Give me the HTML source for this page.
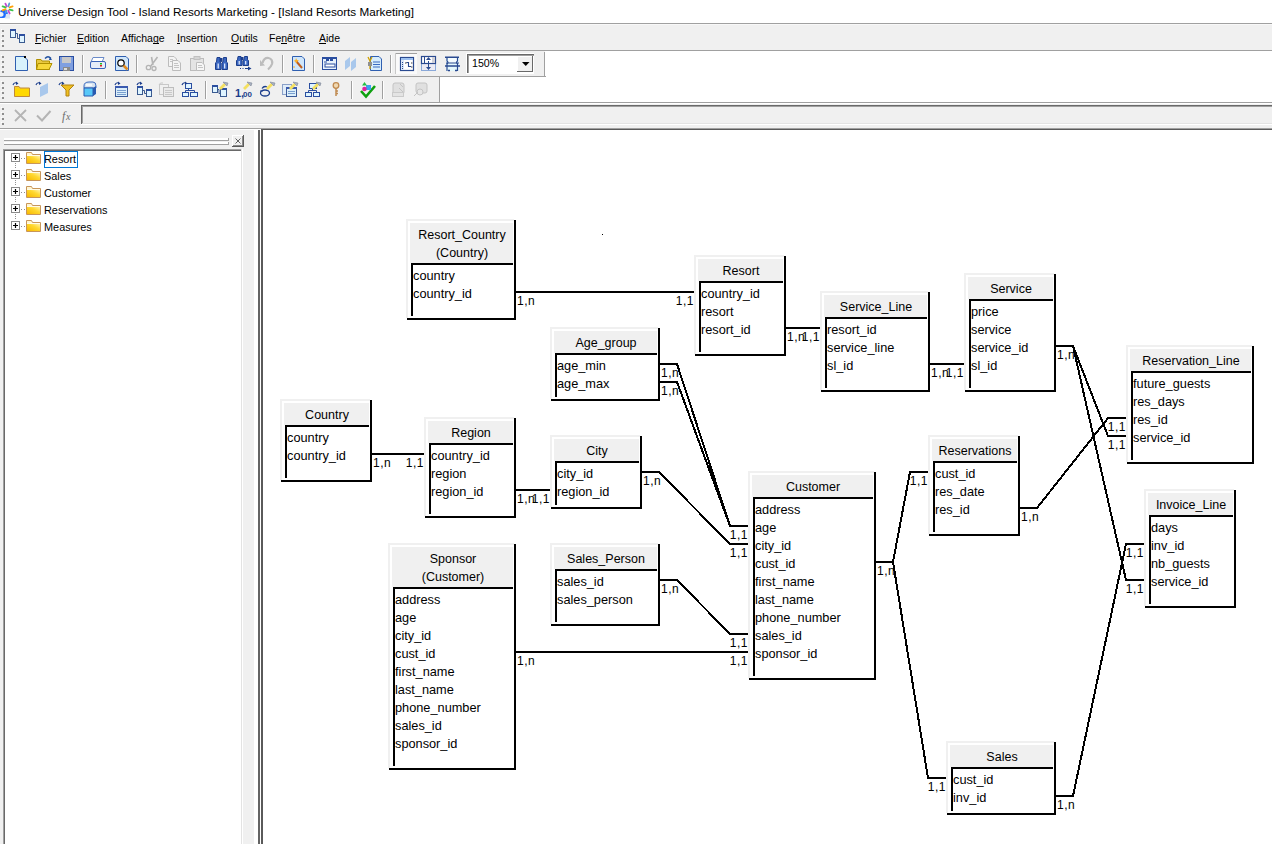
<!DOCTYPE html>
<html><head><meta charset="utf-8">
<style>
*{margin:0;padding:0;box-sizing:border-box}
html,body{width:1272px;height:844px;overflow:hidden;background:#fff;font-family:"Liberation Sans",sans-serif;color:#000}
.a{position:absolute}
i{position:absolute;display:block}
.tb{position:absolute;background:#fff}
.hd{position:absolute;text-align:center;font-size:12.5px;line-height:18px;white-space:nowrap}
.rw{position:absolute;font-size:12.75px;line-height:18px;white-space:nowrap}
.lb{position:absolute;font-size:12px;line-height:12px;white-space:nowrap;letter-spacing:0.5px}
svg.lines{position:absolute;left:0;top:0}
svg.lines path{fill:none;stroke:#000;stroke-width:2;shape-rendering:crispEdges;stroke-linejoin:bevel}
.menu span{position:absolute;top:32px;font-size:10.5px;line-height:12px}
.menu u{text-decoration:none;position:relative}.menu u:after{content:"";position:absolute;left:0;right:0;top:11px;height:1px;background:#000}
</style></head><body>
<!-- title bar -->
<div class="a" style="left:0;top:0;width:1272px;height:23px;background:#fff"></div>
<div class="a" style="left:18px;top:5px;font-size:11.7px;line-height:14px;white-space:nowrap">Universe Design Tool - Island Resorts Marketing - [Island Resorts Marketing]</div>
<i style="left:0;top:23px;width:1272px;height:1px;background:#a0a0a0"></i>
<!-- menu bar -->
<i style="left:0;top:24px;width:1272px;height:26px;background:#f0f0f0"></i>
<i style="left:0;top:24px;width:1272px;height:1px;background:#f8f8f8"></i>
<i style="left:0;top:50px;width:1272px;height:1px;background:#a0a0a0"></i>
<div class="menu">
<span style="left:35px"><u>F</u>ichier</span>
<span style="left:77px"><u>E</u>dition</span>
<span style="left:121px">Afficha<u>g</u>e</span>
<span style="left:177px"><u>I</u>nsertion</span>
<span style="left:231px"><u>O</u>utils</span>
<span style="left:269px">Fe<u>n</u>être</span>
<span style="left:319px"><u>A</u>ide</span>
</div>
<!-- toolbar 1 -->
<i style="left:0;top:51px;width:545px;height:25px;background:#f0f0f0"></i>
<i style="left:0;top:76px;width:546px;height:1px;background:#a0a0a0"></i>
<i style="left:544px;top:52px;width:1px;height:24px;background:#a0a0a0"></i>
<!-- toolbar 2 -->
<i style="left:0;top:77px;width:440px;height:25px;background:#f0f0f0"></i>
<i style="left:439px;top:77px;width:1px;height:25px;background:#a0a0a0"></i>
<!-- formula bar -->
<i style="left:0;top:102px;width:1272px;height:1px;background:#a0a0a0"></i>
<i style="left:0;top:103px;width:1272px;height:1px;background:#fff"></i>
<i style="left:0;top:104px;width:1272px;height:24px;background:#f0f0f0"></i>
<i style="left:0;top:128px;width:1272px;height:1px;background:#a0a0a0"></i>
<i style="left:0;top:129px;width:261px;height:1px;background:#fff"></i>
<i style="left:261px;top:129px;width:1011px;height:1px;background:#5a5a5a"></i>
<!-- left panel -->
<i style="left:0;top:130px;width:254px;height:714px;background:#f0f0f0"></i>
<i style="left:3px;top:149px;width:238px;height:695px;background:#a0a0a0"></i>
<i style="left:4px;top:150px;width:237px;height:694px;background:#696969"></i>
<i style="left:5px;top:151px;width:236px;height:693px;background:#fff"></i>
<i style="left:241px;top:149px;width:1px;height:695px;background:#e3e3e3"></i>
<i style="left:242px;top:149px;width:1px;height:695px;background:#fff"></i>
<i style="left:254px;top:130px;width:4px;height:714px;background:#fff"></i>
<i style="left:258px;top:130px;width:2px;height:714px;background:#646464"></i>
<i style="left:261px;top:129px;width:2px;height:715px;background:#5a5a5a"></i>
<!-- formula box -->
<i style="left:81px;top:105px;width:1191px;height:1px;background:#696969"></i>
<i style="left:81px;top:105px;width:1px;height:19px;background:#696969"></i>
<i style="left:82px;top:106px;width:1190px;height:1px;background:#a0a0a0"></i>
<i style="left:82px;top:106px;width:1px;height:17px;background:#a0a0a0"></i>
<i style="left:82px;top:123px;width:1190px;height:1px;background:#e3e3e3"></i>
<i style="left:81px;top:124px;width:1191px;height:1px;background:#fff"></i>
<!-- panel title -->
<i style="left:4px;top:138px;width:224px;height:2px;background:#fff"></i>
<i style="left:4px;top:140px;width:225px;height:1px;background:#a0a0a0"></i>
<i style="left:4px;top:142px;width:224px;height:2px;background:#fff"></i>
<i style="left:4px;top:144px;width:225px;height:1px;background:#a0a0a0"></i>
<i style="left:228px;top:138px;width:1px;height:3px;background:#a0a0a0"></i>
<i style="left:228px;top:142px;width:1px;height:3px;background:#a0a0a0"></i>
<i style="left:232px;top:135px;width:12px;height:12px;background:#fff"></i>
<i style="left:233px;top:136px;width:10px;height:9px;background:#f0f0f0"></i>
<i style="left:242px;top:136px;width:1px;height:11px;background:#8a8a8a"></i>
<i style="left:243px;top:135px;width:1px;height:12px;background:#5a5a5a"></i>
<i style="left:233px;top:145px;width:10px;height:1px;background:#8a8a8a"></i>
<i style="left:232px;top:146px;width:12px;height:1px;background:#5a5a5a"></i>
<svg class="a" style="left:232px;top:135px" width="12" height="12"><path d="M3.5,3.5 L8.5,8.5 M8.5,3.5 L3.5,8.5" stroke="#505050" stroke-width=".9"/></svg>
<svg class="a" style="left:0;top:0" width="560" height="130" viewBox="0 0 560 130"><g>
<path d="M0.5,10.5 C3,9 6.5,9.5 7.5,12 C8.5,15 7,18 3,18 L0,18 Z" fill="#1f6cff"/>
<path d="M0,12 C2,11.5 4,12.5 3.5,15 C3,16.5 1.5,17 0,16.5 Z" fill="#eef3fa"/>
<path d="M6,14 L10,14 L10,18.5 L5,18.5 Z" fill="#dde6f2"/>
<g stroke-width="1.8" stroke-linecap="round">
<path d="M5.4,3.6 L6.7,6.4" stroke="#c34ccf"/>
<path d="M8.3,10.6 L9.6,13.4" stroke="#c34ccf"/>
<path d="M9.3,3.4 L8.4,6.3" stroke="#5b9bd5"/>
<path d="M6.3,10.6 L5.7,12.6" stroke="#5b9bd5"/>
<path d="M2.6,6.4 L5.6,7.4" stroke="#3ec24a"/>
<path d="M9.6,9.6 L12.6,10.4" stroke="#3ec24a"/>
<path d="M9.6,7.4 L12.6,6.4" stroke="#ffa10a"/>
<path d="M2.6,10.4 L5.6,9.2" stroke="#ffa10a"/>
</g></g><rect x="2" y="30" width="2" height="2" fill="#8e8e8e"/><rect x="1" y="29" width="1" height="1" fill="#fff"/><rect x="2" y="35" width="2" height="2" fill="#8e8e8e"/><rect x="1" y="34" width="1" height="1" fill="#fff"/><rect x="2" y="40" width="2" height="2" fill="#8e8e8e"/><rect x="1" y="39" width="1" height="1" fill="#fff"/><rect x="2" y="45" width="2" height="2" fill="#8e8e8e"/><rect x="1" y="44" width="1" height="1" fill="#fff"/><rect x="10.5" y="29.5" width="5" height="8" fill="#dff4ff" stroke="#3a5a90"/><rect x="10" y="29" width="6" height="2" fill="#2c4fa0"/>
<rect x="19.5" y="34.5" width="5" height="8" fill="#dff4ff" stroke="#3a5a90"/><rect x="19" y="34" width="6" height="2" fill="#2c4fa0"/>
<path d="M16,33.5 H17.5 V38.5 H19" fill="none" stroke="#3a5a90"/><rect x="2" y="56" width="2" height="2" fill="#8e8e8e"/><rect x="1" y="55" width="1" height="1" fill="#fff"/><rect x="2" y="61" width="2" height="2" fill="#8e8e8e"/><rect x="1" y="60" width="1" height="1" fill="#fff"/><rect x="2" y="66" width="2" height="2" fill="#8e8e8e"/><rect x="1" y="65" width="1" height="1" fill="#fff"/><rect x="2" y="71" width="2" height="2" fill="#8e8e8e"/><rect x="1" y="70" width="1" height="1" fill="#fff"/><path d="M15.5,56.5 H24 L27.5,60 V70.5 H15.5 Z" fill="#d8f2fc" stroke="#2f5fb0"/><rect x="24" y="56" width="2" height="2" fill="#000"/><path d="M36.5,59.5 H41 L42,61 H49.5 V69.5 H36.5 Z" fill="#e8c840" stroke="#b09000"/>
<path d="M38,63.5 H52 L49,69.5 H36.5 Z" fill="#f7d83a" stroke="#b09000"/>
<path d="M45,58.5 Q48,55 51,58.5" fill="none" stroke="#2050a0" stroke-width="1.3"/><path d="M50,57 L52,60 L49,60 Z" fill="#2050a0"/><rect x="59.5" y="56.5" width="14" height="14" fill="#7f9fe0" stroke="#2a4ea0"/><rect x="62" y="57" width="9" height="6" fill="#c8c8c8"/><rect x="63" y="67" width="7" height="4" fill="#8a8a8a"/><rect x="64" y="68" width="3" height="2" fill="#ddd"/><rect x="82" y="55" width="1" height="18" fill="#a0a0a0"/><rect x="83" y="55" width="1" height="18" fill="#fff"/><path d="M93,57.5 H104 L102,62 H91 Z" fill="#fff" stroke="#6a8ac8"/><rect x="90.5" y="61.5" width="15" height="7" rx="1.5" fill="#e6ecf8" stroke="#3b63b8"/><rect x="100" y="63" width="2" height="1.5" fill="#20c020"/><rect x="100" y="65" width="2" height="1.5" fill="#e02020"/><path d="M115.5,56.5 H126 L128.5,59 V70.5 H115.5 Z" fill="#cfe6fb" stroke="#2f5fb0"/><circle cx="121" cy="63" r="3.2" fill="#fff" stroke="#000" stroke-width="1.2"/><path d="M123.5,65.5 L127.5,69.5" stroke="#e08a20" stroke-width="2.5"/><rect x="136" y="55" width="1" height="18" fill="#a0a0a0"/><rect x="137" y="55" width="1" height="18" fill="#fff"/><path d="M157.5,57 L150.5,66.5 M151.5,57 L153,65" stroke="#b4b4b4" stroke-width="1.6"/><circle cx="148.5" cy="67.5" r="2.2" fill="none" stroke="#b4b4b4" stroke-width="1.3"/><circle cx="154" cy="68.5" r="2" fill="none" stroke="#b4b4b4" stroke-width="1.3"/><path d="M168.5,56.5 H174 L176.5,59 V66.5 H168.5 Z" fill="#f4f4f4" stroke="#bcbcbc"/><path d="M172.5,60.5 H178 L180.5,63 V70.5 H172.5 Z" fill="#f4f4f4" stroke="#bcbcbc"/><path d="M174,63.5 H178 M174,65.5 H179 M174,67.5 H179 M170,59.5 H173 M170,61.5 H172" stroke="#c4c4c4"/><rect x="190.5" y="58.5" width="13" height="12" fill="#e4e4e4" stroke="#bcbcbc"/><rect x="194" y="56.5" width="6" height="3" fill="#d4d4d4" stroke="#c0c0c0"/><path d="M196.5,62.5 H202 L204.5,65 V70.5 H196.5 Z" fill="#f6f6f6" stroke="#bcbcbc"/><path d="M198,65.5 H202 M198,67.5 H203" stroke="#c4c4c4"/><path d="M217,57.5 H220 V61.94 L221,62.85 V69.5 H215.5 V62.85 L216.5,61.94 Z" fill="#3a66c0" stroke="#1c3e8c" stroke-width="1"/><path d="M218.2,63.5 V68.5" stroke="#e8f0ff" stroke-width="1.2"/><path d="M223.5,57.5 H226.5 V61.94 L227.5,62.85 V69.5 H222.0 V62.85 L223.0,61.94 Z" fill="#3a66c0" stroke="#1c3e8c" stroke-width="1"/><path d="M224.7,63.5 V68.5" stroke="#e8f0ff" stroke-width="1.2"/><rect x="220" y="58" width="2.5" height="3.9" fill="#1c3e8c"/><path d="M238,56.5 H241 V59.8 L242,60.5 V65.5 H236.5 V60.5 L237.5,59.8 Z" fill="#3a66c0" stroke="#1c3e8c" stroke-width="1"/><path d="M239.2,61.0 V64.5" stroke="#e8f0ff" stroke-width="1.2"/><path d="M244.5,56.5 H247.5 V59.8 L248.5,60.5 V65.5 H243.0 V60.5 L244.0,59.8 Z" fill="#3a66c0" stroke="#1c3e8c" stroke-width="1"/><path d="M245.7,61.0 V64.5" stroke="#e8f0ff" stroke-width="1.2"/><rect x="241" y="57" width="2.5" height="3.0" fill="#1c3e8c"/><path d="M240,68.5 H241 M242.5,68.5 H243.5 M245,68.5 H249" stroke="#1c3e8c" stroke-width="1.2"/><path d="M248,66.5 L251.5,68.5 L248,70.5 Z" fill="#1c3e8c"/><path d="M262.5,63 Q264,57.5 268.5,58 Q273,59 272,64 Q271,67 268,69.5" fill="none" stroke="#bcbcbc" stroke-width="2.2"/><path d="M260,60 L265,65.5 L260,66 Z" fill="#bcbcbc"/><rect x="282" y="55" width="1" height="18" fill="#a0a0a0"/><rect x="283" y="55" width="1" height="18" fill="#fff"/><path d="M292.5,56.5 H302 L304.5,59 V70.5 H292.5 Z" fill="#cfe6fb" stroke="#2f5fb0"/><path d="M296,61 L302,68" stroke="#c06020" stroke-width="2"/><path d="M296,58 L297,60 L299,60.5 L297,61.5 L296.5,63.5 L295.5,61.5 L293.5,61 L295.5,60 Z" fill="#ffb020"/><path d="M294,66 L295,67 L294,68 L293,67 Z" fill="#ffb020"/><rect x="313" y="55" width="1" height="18" fill="#a0a0a0"/><rect x="314" y="55" width="1" height="18" fill="#fff"/><rect x="322.5" y="57.5" width="14" height="12" fill="#e8f2fc" stroke="#2a4ea0"/><rect x="322" y="57" width="15" height="2" fill="#2a4ea0"/><rect x="326" y="59" width="3" height="2" fill="#2a4ea0"/><rect x="330" y="59" width="3" height="2" fill="#2a4ea0"/><rect x="325" y="64" width="10" height="3" fill="#fff" stroke="#2a4ea0" stroke-width="1"/><path d="M324,62 H327" stroke="#2a4ea0"/><path d="M345,61 L350,57 V66 L345,70 Z" fill="#a9c8ec"/><path d="M351,62 L356,58 V67 L351,71 Z" fill="#a9c8ec"/><path d="M370.5,56.5 H379 L381.5,59 V70.5 H370.5 Z" fill="#d6ecfc" stroke="#2f5fb0"/><path d="M373,62 H380 M373,64.5 H380 M373,67 H380" stroke="#3a6ac0"/><path d="M368,57 L370,61 L372,57 M370,61 V69" stroke="#d0a000" stroke-width="1.3" fill="none"/><rect x="368" y="62" width="4" height="4" fill="#909090"/><rect x="390" y="55" width="1" height="18" fill="#a0a0a0"/><rect x="391" y="55" width="1" height="18" fill="#fff"/><rect x="395" y="53" width="22" height="21" fill="#fafafa"/><rect x="395" y="53" width="22" height="1" fill="#a0a0a0"/><rect x="395" y="53" width="1" height="21" fill="#c8c8c8"/><rect x="400.5" y="57.5" width="13" height="13" fill="#fff" stroke="#2a4a90" stroke-width="1.2"/><rect x="401" y="58" width="12" height="2" fill="#9cc0f0"/><rect x="401" y="60" width="3" height="10" fill="#dce8f8"/><path d="M402,62.5 H403 M402,64.5 H403 M402,66.5 H403 M402,68.5 H403" stroke="#2a4a90"/><path d="M406,62.5 H408.5 V66.5 H411" fill="none" stroke="#2a4a90" stroke-width="1.1"/><rect x="405" y="62" width="1.5" height="2" fill="#a0a0a0"/><rect x="411" y="62" width="1.5" height="2" fill="#a0a0a0"/><rect x="411" y="66" width="1.5" height="2" fill="#a0a0a0"/><rect x="421.5" y="63.5" width="14" height="7" fill="#ecebf4" stroke="#8aa8d8"/><rect x="421.5" y="56.5" width="14" height="7" fill="#fff" stroke="#2a4a90" stroke-width="1.2"/><rect x="432" y="57" width="3" height="6" fill="#d0d0d8"/><path d="M424.5,57 V63 M428.5,61 V69" stroke="#2a4a90" stroke-width="1"/><path d="M426,60 L428.5,57 L431,60 Z M426,67 L428.5,70 L431,67 Z" fill="#2a4a90"/><rect x="446" y="57" width="13" height="14" fill="#e4f8fc"/><rect x="448" y="58" width="9" height="5" fill="#f4fcff"/><path d="M445,57.2 H459 M449,66 H456" stroke="#2a4a90" stroke-width="1.6"/><path d="M447,57 V61 Q449,62.5 447,64 V71 M457.5,57 V61 Q455.5,62.5 457.5,64 V71 M446,63 H459" fill="none" stroke="#2a4a90" stroke-width="1.2"/><path d="M445,66 H449 M456,66 H460 M448,70.5 H450 M455,70.5 H457" stroke="#2a4a90" stroke-width="1.4"/><rect x="466" y="53" width="68" height="21" fill="#fff"/><rect x="467" y="54" width="67" height="1" fill="#696969"/><rect x="467" y="54" width="1" height="19" fill="#696969"/><rect x="468" y="55" width="1" height="18" fill="#a0a0a0"/><rect x="468" y="55" width="66" height="1" fill="#a0a0a0"/>
<rect x="517" y="56" width="16" height="16" fill="#f0f0f0"/><rect x="532" y="56" width="1" height="16" fill="#696969"/><rect x="517" y="71" width="16" height="1" fill="#696969"/><rect x="517" y="56" width="15" height="1" fill="#fff"/><rect x="517" y="56" width="1" height="15" fill="#fff"/>
<path d="M522,62 H529.5 L525.75,66 Z" fill="#000"/><rect x="2" y="82" width="2" height="2" fill="#8e8e8e"/><rect x="1" y="81" width="1" height="1" fill="#fff"/><rect x="2" y="87" width="2" height="2" fill="#8e8e8e"/><rect x="1" y="86" width="1" height="1" fill="#fff"/><rect x="2" y="92" width="2" height="2" fill="#8e8e8e"/><rect x="1" y="91" width="1" height="1" fill="#fff"/><rect x="2" y="97" width="2" height="2" fill="#8e8e8e"/><rect x="1" y="96" width="1" height="1" fill="#fff"/><path d="M14.5,86.5 H19 L20,88 H29.5 V96.5 H14.5 Z" fill="#f8d020" stroke="#c08a3a"/><rect x="15" y="89" width="14" height="7" fill="#ffd800"/><path d="M13,85 Q14,82 17,83" fill="none" stroke="#1c3e8c" stroke-width="1.2"/><path d="M16,81.5 L18.5,83.5 L16,85 Z" fill="#1c3e8c"/><path d="M40,87 L48,83 V93 L40,97 Z" fill="#a9c8ec"/><path d="M36,85 Q37,82 40,83" fill="none" stroke="#1c3e8c" stroke-width="1.2"/><path d="M39,81.5 L41.5,83.5 L39,85 Z" fill="#1c3e8c"/><path d="M61,85 H74 L69,90 V96 L66,96 V90 Z" fill="#f0c020" stroke="#b08010" stroke-width="1"/><path d="M59,85 Q60,82 63,83" fill="none" stroke="#1c3e8c" stroke-width="1.2"/><path d="M62,81.5 L64.5,83.5 L62,85 Z" fill="#1c3e8c"/><path d="M84,86 Q84,82 89,82 H93 Q96,82 96,86 V88 H84 Z" fill="#d8e4f0" stroke="#3a6ac0"/><path d="M84,88 H93 V96 H84 Z" fill="#58c8f8" stroke="#2a5ab0"/><path d="M93,88 L96,86 V94 L93,96 Z" fill="#2a5ab0"/><path d="M86,85 H92" stroke="#fff" stroke-width="1.5"/><rect x="105" y="81" width="1" height="18" fill="#a0a0a0"/><rect x="106" y="81" width="1" height="18" fill="#fff"/><rect x="115.5" y="86.5" width="12" height="10" fill="#dbeefa" stroke="#3a5a98"/><rect x="115" y="86" width="13" height="2" fill="#3a5ab0"/><path d="M117,90.5 H126 M117,92.5 H126 M117,94.5 H126" stroke="#7aa0d0"/><path d="M115,85 Q116,82 119,83" fill="none" stroke="#1c3e8c" stroke-width="1.2"/><path d="M118,81.5 L120.5,83.5 L118,85 Z" fill="#1c3e8c"/><rect x="137.5" y="86.5" width="5" height="8" fill="#dff4ff" stroke="#3a5a90"/><rect x="137" y="86" width="6" height="2" fill="#2c4fa0"/><rect x="146.5" y="89.5" width="5" height="7" fill="#dff4ff" stroke="#3a5a90"/><rect x="146" y="89" width="6" height="2" fill="#2c4fa0"/><path d="M143,90.5 H144.5 V93.5 H146" fill="none" stroke="#3a5a90"/><path d="M137,85 Q138,82 141,83" fill="none" stroke="#1c3e8c" stroke-width="1.2"/><path d="M140,81.5 L142.5,83.5 L140,85 Z" fill="#1c3e8c"/><rect x="159.5" y="84.5" width="9" height="10" fill="#f0f0f0" stroke="#c8c8c8"/><rect x="163.5" y="87.5" width="10" height="9" fill="#eaeaea" stroke="#bdbdbd"/><path d="M165,90.5 H172 M165,92.5 H172 M165,94.5 H172" stroke="#c8c8c8"/><path d="M159,85 Q160,82 163,83" fill="none" stroke="#c8c8c8"/><rect x="185.5" y="83.5" width="6" height="5" fill="#dff4ff" stroke="#2a4ea0"/><rect x="182.5" y="92.5" width="6" height="4" fill="#dff4ff" stroke="#2a4ea0"/><rect x="190.5" y="92.5" width="7" height="4" fill="#dff4ff" stroke="#2a4ea0"/><path d="M188.5,89 V90.5 M185.5,92 V90.5 H194.5 V92" fill="none" stroke="#2a4ea0"/><path d="M182,85 Q183,82 186,83" fill="none" stroke="#1c3e8c" stroke-width="1.2"/><path d="M185,81.5 L187.5,83.5 L185,85 Z" fill="#1c3e8c"/><rect x="205" y="81" width="1" height="18" fill="#a0a0a0"/><rect x="206" y="81" width="1" height="18" fill="#fff"/><rect x="212.5" y="85.5" width="5" height="7" fill="#dff4ff" stroke="#3a5a90"/><rect x="212" y="85" width="6" height="2" fill="#2c4fa0"/><rect x="220.5" y="88.5" width="6" height="8" fill="#dff4ff" stroke="#3a5a90"/><rect x="220" y="88" width="7" height="2" fill="#2c4fa0"/><path d="M218,89.5 H219 V93.5 H220" fill="none" stroke="#3a5a90"/><path d="M219,88 L224,83 L226,85 L221,90 Z" fill="#f4e060"/><path d="M223,82 L227,86 L228,83 Z" fill="#a8b0c0" stroke="#808898" stroke-width=".6"/><text x="235" y="96.5" font-family="Liberation Sans" font-weight="bold" font-size="11" fill="#1c3e8c">1,</text><text x="243" y="96.5" font-family="Liberation Sans" font-weight="bold" font-size="8" fill="#1c3e8c">00</text><path d="M243,88 L248,83 L250,85 L245,90 Z" fill="#f4e060"/><path d="M247,82 L251,86 L252,83 Z" fill="#a8b0c0" stroke="#808898" stroke-width=".6"/><ellipse cx="265" cy="93" rx="4.5" ry="3" fill="none" stroke="#1c3e8c" stroke-width="1.3"/><path d="M262,88.5 Q264,85.5 267,87" fill="none" stroke="#1c3e8c" stroke-width="1.3"/><path d="M260,91 H263" stroke="#1c3e8c"/><path d="M266,88 L271,83 L273,85 L268,90 Z" fill="#f4e060"/><path d="M270,82 L274,86 L275,83 Z" fill="#a8b0c0" stroke="#808898" stroke-width=".6"/><rect x="282.5" y="84.5" width="9" height="10" fill="#e0ecf8" stroke="#8aa0c8"/><rect x="286.5" y="87.5" width="10" height="9" fill="#dbeefa" stroke="#3a5a98"/><rect x="286" y="87" width="11" height="2" fill="#3a5ab0"/><path d="M288,91.5 H295 M288,93.5 H295" stroke="#7aa0d0"/><path d="M289,88 L294,83 L296,85 L291,90 Z" fill="#f4e060"/><path d="M293,82 L297,86 L298,83 Z" fill="#a8b0c0" stroke="#808898" stroke-width=".6"/><rect x="309.5" y="83.5" width="7" height="5" fill="#dff4ff" stroke="#2a4ea0"/><rect x="305.5" y="92.5" width="6" height="4" fill="#dff4ff" stroke="#2a4ea0"/><rect x="313.5" y="92.5" width="6" height="4" fill="#dff4ff" stroke="#2a4ea0"/><path d="M308.5,92 V90.5 H316.5 V92 M312.5,89 V90.5" fill="none" stroke="#2a4ea0"/><path d="M312,88 L317,83 L319,85 L314,90 Z" fill="#f4e060"/><path d="M316,82 L320,86 L321,83 Z" fill="#a8b0c0" stroke="#808898" stroke-width=".6"/><circle cx="336" cy="85.5" r="2.8" fill="#f0d8b0" stroke="#c08a50" stroke-width="1.3"/><path d="M336,88 V96 M336,91 H338 M336,93.5 H338" stroke="#c08a50" stroke-width="1.5"/><rect x="351" y="81" width="1" height="18" fill="#a0a0a0"/><rect x="352" y="81" width="1" height="18" fill="#fff"/><path d="M361,91 L366,96.5 L375,86" fill="none" stroke="#10a010" stroke-width="2.6"/><rect x="366" y="85" width="5" height="5" fill="#3aa0f0"/><path d="M362,85.5 L364.5,82 L367,85.5 Z" fill="#20c040"/><circle cx="364.5" cy="89" r="2.3" fill="#e020a0"/><rect x="382" y="81" width="1" height="18" fill="#a0a0a0"/><rect x="383" y="81" width="1" height="18" fill="#fff"/><rect x="393" y="83" width="11" height="11" rx="2" fill="#e0e0e0" stroke="#c4c4c4"/><path d="M400,84 L403,87 M399,88 L403,92" stroke="#c4c4c4"/><rect x="392.5" y="92.5" width="11" height="4" fill="#e4e4e4" stroke="#cacaca"/><rect x="416" y="83" width="11" height="10" rx="2" fill="#e0e0e0" stroke="#c4c4c4"/><circle cx="420" cy="92" r="3" fill="#e6e6e6" stroke="#c4c4c4"/><path d="M414,96 L418,92" stroke="#c4c4c4"/><rect x="2" y="108" width="2" height="2" fill="#8e8e8e"/><rect x="1" y="107" width="1" height="1" fill="#fff"/><rect x="2" y="113" width="2" height="2" fill="#8e8e8e"/><rect x="1" y="112" width="1" height="1" fill="#fff"/><rect x="2" y="118" width="2" height="2" fill="#8e8e8e"/><rect x="1" y="117" width="1" height="1" fill="#fff"/><rect x="2" y="123" width="2" height="2" fill="#8e8e8e"/><rect x="1" y="122" width="1" height="1" fill="#fff"/><path d="M15,110 L26,121 M26,110 L15,121" stroke="#b4b4b4" stroke-width="1.8"/><path d="M37,115.5 L42,120.5 L50.5,111" fill="none" stroke="#b4b4b4" stroke-width="2"/><text x="62" y="120" font-family="Liberation Serif" font-style="italic" font-size="12" fill="#6e6e6e">f</text><text x="66" y="120" font-family="Liberation Serif" font-style="italic" font-size="10" fill="#6e6e6e">x</text></svg><svg class="a" style="left:0;top:140px" width="50" height="110" viewBox="0 140 50 110"><defs><linearGradient id="fg" x1="0" y1="1" x2="1" y2="0"><stop offset="0" stop-color="#f8b800"/><stop offset=".6" stop-color="#ffd830"/><stop offset="1" stop-color="#fff2a8"/></linearGradient></defs><rect x="11.5" y="153.5" width="8" height="8" fill="#fff" stroke="#8a8a8a"/><path d="M13,157.5 H18 M15.5,155 V160" stroke="#000" stroke-width="1.2"/><rect x="21" y="158" width="1" height="1" fill="#909090"/><rect x="24" y="158" width="1" height="1" fill="#909090"/><rect x="15" y="163" width="1" height="1" fill="#909090"/><rect x="15" y="165" width="1" height="1" fill="#909090"/><rect x="15" y="167" width="1" height="1" fill="#909090"/><path d="M26.5,152.5 H31.5 L32.5,154.5 H40.5 V163.5 H26.5 Z" fill="#fff6d0" stroke="#c8965a"/><rect x="27" y="156" width="13" height="7" fill="url(#fg)"/><rect x="27" y="155" width="13" height="1" fill="#fffbe8"/><rect x="11.5" y="170.5" width="8" height="8" fill="#fff" stroke="#8a8a8a"/><path d="M13,174.5 H18 M15.5,172 V177" stroke="#000" stroke-width="1.2"/><rect x="21" y="175" width="1" height="1" fill="#909090"/><rect x="24" y="175" width="1" height="1" fill="#909090"/><rect x="15" y="180" width="1" height="1" fill="#909090"/><rect x="15" y="182" width="1" height="1" fill="#909090"/><rect x="15" y="184" width="1" height="1" fill="#909090"/><path d="M26.5,169.5 H31.5 L32.5,171.5 H40.5 V180.5 H26.5 Z" fill="#fff6d0" stroke="#c8965a"/><rect x="27" y="173" width="13" height="7" fill="url(#fg)"/><rect x="27" y="172" width="13" height="1" fill="#fffbe8"/><rect x="11.5" y="187.5" width="8" height="8" fill="#fff" stroke="#8a8a8a"/><path d="M13,191.5 H18 M15.5,189 V194" stroke="#000" stroke-width="1.2"/><rect x="21" y="192" width="1" height="1" fill="#909090"/><rect x="24" y="192" width="1" height="1" fill="#909090"/><rect x="15" y="197" width="1" height="1" fill="#909090"/><rect x="15" y="199" width="1" height="1" fill="#909090"/><rect x="15" y="201" width="1" height="1" fill="#909090"/><path d="M26.5,186.5 H31.5 L32.5,188.5 H40.5 V197.5 H26.5 Z" fill="#fff6d0" stroke="#c8965a"/><rect x="27" y="190" width="13" height="7" fill="url(#fg)"/><rect x="27" y="189" width="13" height="1" fill="#fffbe8"/><rect x="11.5" y="204.5" width="8" height="8" fill="#fff" stroke="#8a8a8a"/><path d="M13,208.5 H18 M15.5,206 V211" stroke="#000" stroke-width="1.2"/><rect x="21" y="209" width="1" height="1" fill="#909090"/><rect x="24" y="209" width="1" height="1" fill="#909090"/><rect x="15" y="214" width="1" height="1" fill="#909090"/><rect x="15" y="216" width="1" height="1" fill="#909090"/><rect x="15" y="218" width="1" height="1" fill="#909090"/><path d="M26.5,203.5 H31.5 L32.5,205.5 H40.5 V214.5 H26.5 Z" fill="#fff6d0" stroke="#c8965a"/><rect x="27" y="207" width="13" height="7" fill="url(#fg)"/><rect x="27" y="206" width="13" height="1" fill="#fffbe8"/><rect x="11.5" y="221.5" width="8" height="8" fill="#fff" stroke="#8a8a8a"/><path d="M13,225.5 H18 M15.5,223 V228" stroke="#000" stroke-width="1.2"/><rect x="21" y="226" width="1" height="1" fill="#909090"/><rect x="24" y="226" width="1" height="1" fill="#909090"/><path d="M26.5,220.5 H31.5 L32.5,222.5 H40.5 V231.5 H26.5 Z" fill="#fff6d0" stroke="#c8965a"/><rect x="27" y="224" width="13" height="7" fill="url(#fg)"/><rect x="27" y="223" width="13" height="1" fill="#fffbe8"/></svg><div class="a" style="left:44px;top:152px;font-size:10.9px;line-height:14px;white-space:nowrap">Resort</div><div class="a" style="left:44px;top:169px;font-size:10.9px;line-height:14px;white-space:nowrap">Sales</div><div class="a" style="left:44px;top:186px;font-size:10.9px;line-height:14px;white-space:nowrap">Customer</div><div class="a" style="left:44px;top:203px;font-size:10.9px;line-height:14px;white-space:nowrap">Reservations</div><div class="a" style="left:44px;top:220px;font-size:10.9px;line-height:14px;white-space:nowrap">Measures</div><i style="left:44px;top:151px;width:34px;height:17px;border:1px solid #0078d7"></i>
<div class="a" style="left:472px;top:57px;font-size:10.6px;line-height:12px">150%</div>
<i style="left:602px;top:234px;width:1px;height:1px;background:#000"></i>
<!-- diagram -->
<div class="tb" style="left:406px;top:219px;width:110px;height:101px"><i style="left:0;top:0;width:108px;height:2px;background:#f0f0f0"></i><i style="left:0;top:0;width:2px;height:99px;background:#f0f0f0"></i><i style="left:4px;top:4px;width:103px;height:40px;background:#f0f0f0"></i><i style="left:108px;top:1px;width:2px;height:100px;background:#000"></i><i style="left:1px;top:99px;width:109px;height:2px;background:#000"></i><i style="left:5px;top:44px;width:102px;height:2px;background:#000"></i><i style="left:5px;top:44px;width:2px;height:53px;background:#000"></i><div class="hd" style="left:4px;top:7px;width:104px">Resort_Country<br>(Country)</div><div class="rw" style="left:7px;top:48px">country<br>country_id</div></div><div class="tb" style="left:694px;top:255px;width:92px;height:101px"><i style="left:0;top:0;width:90px;height:2px;background:#f0f0f0"></i><i style="left:0;top:0;width:2px;height:99px;background:#f0f0f0"></i><i style="left:4px;top:4px;width:85px;height:22px;background:#f0f0f0"></i><i style="left:90px;top:1px;width:2px;height:100px;background:#000"></i><i style="left:1px;top:99px;width:91px;height:2px;background:#000"></i><i style="left:5px;top:26px;width:84px;height:2px;background:#000"></i><i style="left:5px;top:26px;width:2px;height:71px;background:#000"></i><div class="hd" style="left:4px;top:7px;width:86px">Resort</div><div class="rw" style="left:7px;top:30px">country_id<br>resort<br>resort_id</div></div><div class="tb" style="left:820px;top:291px;width:110px;height:101px"><i style="left:0;top:0;width:108px;height:2px;background:#f0f0f0"></i><i style="left:0;top:0;width:2px;height:99px;background:#f0f0f0"></i><i style="left:4px;top:4px;width:103px;height:22px;background:#f0f0f0"></i><i style="left:108px;top:1px;width:2px;height:100px;background:#000"></i><i style="left:1px;top:99px;width:109px;height:2px;background:#000"></i><i style="left:5px;top:26px;width:102px;height:2px;background:#000"></i><i style="left:5px;top:26px;width:2px;height:71px;background:#000"></i><div class="hd" style="left:4px;top:7px;width:104px">Service_Line</div><div class="rw" style="left:7px;top:30px">resort_id<br>service_line<br>sl_id</div></div><div class="tb" style="left:964px;top:273px;width:92px;height:119px"><i style="left:0;top:0;width:90px;height:2px;background:#f0f0f0"></i><i style="left:0;top:0;width:2px;height:117px;background:#f0f0f0"></i><i style="left:4px;top:4px;width:85px;height:22px;background:#f0f0f0"></i><i style="left:90px;top:1px;width:2px;height:118px;background:#000"></i><i style="left:1px;top:117px;width:91px;height:2px;background:#000"></i><i style="left:5px;top:26px;width:84px;height:2px;background:#000"></i><i style="left:5px;top:26px;width:2px;height:89px;background:#000"></i><div class="hd" style="left:4px;top:7px;width:86px">Service</div><div class="rw" style="left:7px;top:30px">price<br>service<br>service_id<br>sl_id</div></div><div class="tb" style="left:1126px;top:345px;width:128px;height:119px"><i style="left:0;top:0;width:126px;height:2px;background:#f0f0f0"></i><i style="left:0;top:0;width:2px;height:117px;background:#f0f0f0"></i><i style="left:4px;top:4px;width:121px;height:22px;background:#f0f0f0"></i><i style="left:126px;top:1px;width:2px;height:118px;background:#000"></i><i style="left:1px;top:117px;width:127px;height:2px;background:#000"></i><i style="left:5px;top:26px;width:120px;height:2px;background:#000"></i><i style="left:5px;top:26px;width:2px;height:89px;background:#000"></i><div class="hd" style="left:4px;top:7px;width:122px">Reservation_Line</div><div class="rw" style="left:7px;top:30px">future_guests<br>res_days<br>res_id<br>service_id</div></div><div class="tb" style="left:550px;top:327px;width:110px;height:74px"><i style="left:0;top:0;width:108px;height:2px;background:#f0f0f0"></i><i style="left:0;top:0;width:2px;height:72px;background:#f0f0f0"></i><i style="left:4px;top:4px;width:103px;height:22px;background:#f0f0f0"></i><i style="left:108px;top:1px;width:2px;height:73px;background:#000"></i><i style="left:1px;top:72px;width:109px;height:2px;background:#000"></i><i style="left:5px;top:26px;width:102px;height:2px;background:#000"></i><i style="left:5px;top:26px;width:2px;height:44px;background:#000"></i><div class="hd" style="left:4px;top:7px;width:104px">Age_group</div><div class="rw" style="left:7px;top:30px">age_min<br>age_max</div></div><div class="tb" style="left:280px;top:399px;width:92px;height:83px"><i style="left:0;top:0;width:90px;height:2px;background:#f0f0f0"></i><i style="left:0;top:0;width:2px;height:81px;background:#f0f0f0"></i><i style="left:4px;top:4px;width:85px;height:22px;background:#f0f0f0"></i><i style="left:90px;top:1px;width:2px;height:82px;background:#000"></i><i style="left:1px;top:81px;width:91px;height:2px;background:#000"></i><i style="left:5px;top:26px;width:84px;height:2px;background:#000"></i><i style="left:5px;top:26px;width:2px;height:53px;background:#000"></i><div class="hd" style="left:4px;top:7px;width:86px">Country</div><div class="rw" style="left:7px;top:30px">country<br>country_id</div></div><div class="tb" style="left:424px;top:417px;width:92px;height:101px"><i style="left:0;top:0;width:90px;height:2px;background:#f0f0f0"></i><i style="left:0;top:0;width:2px;height:99px;background:#f0f0f0"></i><i style="left:4px;top:4px;width:85px;height:22px;background:#f0f0f0"></i><i style="left:90px;top:1px;width:2px;height:100px;background:#000"></i><i style="left:1px;top:99px;width:91px;height:2px;background:#000"></i><i style="left:5px;top:26px;width:84px;height:2px;background:#000"></i><i style="left:5px;top:26px;width:2px;height:71px;background:#000"></i><div class="hd" style="left:4px;top:7px;width:86px">Region</div><div class="rw" style="left:7px;top:30px">country_id<br>region<br>region_id</div></div><div class="tb" style="left:550px;top:435px;width:92px;height:74px"><i style="left:0;top:0;width:90px;height:2px;background:#f0f0f0"></i><i style="left:0;top:0;width:2px;height:72px;background:#f0f0f0"></i><i style="left:4px;top:4px;width:85px;height:22px;background:#f0f0f0"></i><i style="left:90px;top:1px;width:2px;height:73px;background:#000"></i><i style="left:1px;top:72px;width:91px;height:2px;background:#000"></i><i style="left:5px;top:26px;width:84px;height:2px;background:#000"></i><i style="left:5px;top:26px;width:2px;height:44px;background:#000"></i><div class="hd" style="left:4px;top:7px;width:86px">City</div><div class="rw" style="left:7px;top:30px">city_id<br>region_id</div></div><div class="tb" style="left:748px;top:471px;width:128px;height:209px"><i style="left:0;top:0;width:126px;height:2px;background:#f0f0f0"></i><i style="left:0;top:0;width:2px;height:207px;background:#f0f0f0"></i><i style="left:4px;top:4px;width:121px;height:22px;background:#f0f0f0"></i><i style="left:126px;top:1px;width:2px;height:208px;background:#000"></i><i style="left:1px;top:207px;width:127px;height:2px;background:#000"></i><i style="left:5px;top:26px;width:120px;height:2px;background:#000"></i><i style="left:5px;top:26px;width:2px;height:179px;background:#000"></i><div class="hd" style="left:4px;top:7px;width:122px">Customer</div><div class="rw" style="left:7px;top:30px">address<br>age<br>city_id<br>cust_id<br>first_name<br>last_name<br>phone_number<br>sales_id<br>sponsor_id</div></div><div class="tb" style="left:928px;top:435px;width:92px;height:101px"><i style="left:0;top:0;width:90px;height:2px;background:#f0f0f0"></i><i style="left:0;top:0;width:2px;height:99px;background:#f0f0f0"></i><i style="left:4px;top:4px;width:85px;height:22px;background:#f0f0f0"></i><i style="left:90px;top:1px;width:2px;height:100px;background:#000"></i><i style="left:1px;top:99px;width:91px;height:2px;background:#000"></i><i style="left:5px;top:26px;width:84px;height:2px;background:#000"></i><i style="left:5px;top:26px;width:2px;height:71px;background:#000"></i><div class="hd" style="left:4px;top:7px;width:86px">Reservations</div><div class="rw" style="left:7px;top:30px">cust_id<br>res_date<br>res_id</div></div><div class="tb" style="left:1144px;top:489px;width:92px;height:119px"><i style="left:0;top:0;width:90px;height:2px;background:#f0f0f0"></i><i style="left:0;top:0;width:2px;height:117px;background:#f0f0f0"></i><i style="left:4px;top:4px;width:85px;height:22px;background:#f0f0f0"></i><i style="left:90px;top:1px;width:2px;height:118px;background:#000"></i><i style="left:1px;top:117px;width:91px;height:2px;background:#000"></i><i style="left:5px;top:26px;width:84px;height:2px;background:#000"></i><i style="left:5px;top:26px;width:2px;height:89px;background:#000"></i><div class="hd" style="left:4px;top:7px;width:86px">Invoice_Line</div><div class="rw" style="left:7px;top:30px">days<br>inv_id<br>nb_guests<br>service_id</div></div><div class="tb" style="left:388px;top:543px;width:128px;height:227px"><i style="left:0;top:0;width:126px;height:2px;background:#f0f0f0"></i><i style="left:0;top:0;width:2px;height:225px;background:#f0f0f0"></i><i style="left:4px;top:4px;width:121px;height:40px;background:#f0f0f0"></i><i style="left:126px;top:1px;width:2px;height:226px;background:#000"></i><i style="left:1px;top:225px;width:127px;height:2px;background:#000"></i><i style="left:5px;top:44px;width:120px;height:2px;background:#000"></i><i style="left:5px;top:44px;width:2px;height:179px;background:#000"></i><div class="hd" style="left:4px;top:7px;width:122px">Sponsor<br>(Customer)</div><div class="rw" style="left:7px;top:48px">address<br>age<br>city_id<br>cust_id<br>first_name<br>last_name<br>phone_number<br>sales_id<br>sponsor_id</div></div><div class="tb" style="left:550px;top:543px;width:110px;height:83px"><i style="left:0;top:0;width:108px;height:2px;background:#f0f0f0"></i><i style="left:0;top:0;width:2px;height:81px;background:#f0f0f0"></i><i style="left:4px;top:4px;width:103px;height:22px;background:#f0f0f0"></i><i style="left:108px;top:1px;width:2px;height:82px;background:#000"></i><i style="left:1px;top:81px;width:109px;height:2px;background:#000"></i><i style="left:5px;top:26px;width:102px;height:2px;background:#000"></i><i style="left:5px;top:26px;width:2px;height:53px;background:#000"></i><div class="hd" style="left:4px;top:7px;width:104px">Sales_Person</div><div class="rw" style="left:7px;top:30px">sales_id<br>sales_person</div></div><div class="tb" style="left:946px;top:741px;width:110px;height:74px"><i style="left:0;top:0;width:108px;height:2px;background:#f0f0f0"></i><i style="left:0;top:0;width:2px;height:72px;background:#f0f0f0"></i><i style="left:4px;top:4px;width:103px;height:22px;background:#f0f0f0"></i><i style="left:108px;top:1px;width:2px;height:73px;background:#000"></i><i style="left:1px;top:72px;width:109px;height:2px;background:#000"></i><i style="left:5px;top:26px;width:102px;height:2px;background:#000"></i><i style="left:5px;top:26px;width:2px;height:44px;background:#000"></i><div class="hd" style="left:4px;top:7px;width:104px">Sales</div><div class="rw" style="left:7px;top:30px">cust_id<br>inv_id</div></div><svg class="lines" width="1272" height="844" viewBox="0 0 1272 844"><path d="M516,292 L694,292"/><path d="M786,328 L820,328"/><path d="M930,364 L964,364"/><path d="M1056,346 L1073,346 L1108,436 L1126,436"/><path d="M1056,346 L1073,346 L1126,580 L1144,580"/><path d="M660,364 L677,364 L730,526 L748,526"/><path d="M660,382 L677,382 L730,526 L748,526"/><path d="M372,454 L424,454"/><path d="M516,490 L550,490"/><path d="M642,472 L659,472 L730,544 L748,544"/><path d="M660,580 L677,580 L730,634 L748,634"/><path d="M516,652 L748,652"/><path d="M876,562 L893,562 L910,472 L928,472"/><path d="M876,562 L893,562 L928,778 L946,778"/><path d="M1020,508 L1037,508 L1108,418 L1126,418"/><path d="M1056,796 L1073,796 L1126,544 L1144,544"/></svg><div class="lb" style="left:517px;top:295px">1,n</div><div class="lb" style="left:654px;top:295px;width:40px;text-align:right">1,1</div><div class="lb" style="left:787px;top:331px">1,n</div><div class="lb" style="left:780px;top:331px;width:40px;text-align:right">1,1</div><div class="lb" style="left:931px;top:367px">1,n</div><div class="lb" style="left:924px;top:367px;width:40px;text-align:right">1,1</div><div class="lb" style="left:1057px;top:349px">1,n</div><div class="lb" style="left:1086px;top:439px;width:40px;text-align:right">1,1</div><div class="lb" style="left:1104px;top:583px;width:40px;text-align:right">1,1</div><div class="lb" style="left:661px;top:367px">1,n</div><div class="lb" style="left:708px;top:529px;width:40px;text-align:right">1,1</div><div class="lb" style="left:661px;top:385px">1,n</div><div class="lb" style="left:373px;top:457px">1,n</div><div class="lb" style="left:384px;top:457px;width:40px;text-align:right">1,1</div><div class="lb" style="left:517px;top:493px">1,n</div><div class="lb" style="left:510px;top:493px;width:40px;text-align:right">1,1</div><div class="lb" style="left:643px;top:475px">1,n</div><div class="lb" style="left:708px;top:547px;width:40px;text-align:right">1,1</div><div class="lb" style="left:661px;top:583px">1,n</div><div class="lb" style="left:708px;top:637px;width:40px;text-align:right">1,1</div><div class="lb" style="left:517px;top:655px">1,n</div><div class="lb" style="left:708px;top:655px;width:40px;text-align:right">1,1</div><div class="lb" style="left:877px;top:565px">1,n</div><div class="lb" style="left:888px;top:475px;width:40px;text-align:right">1,1</div><div class="lb" style="left:906px;top:781px;width:40px;text-align:right">1,1</div><div class="lb" style="left:1021px;top:511px">1,n</div><div class="lb" style="left:1086px;top:421px;width:40px;text-align:right">1,1</div><div class="lb" style="left:1057px;top:799px">1,n</div><div class="lb" style="left:1104px;top:547px;width:40px;text-align:right">1,1</div>
</body></html>
